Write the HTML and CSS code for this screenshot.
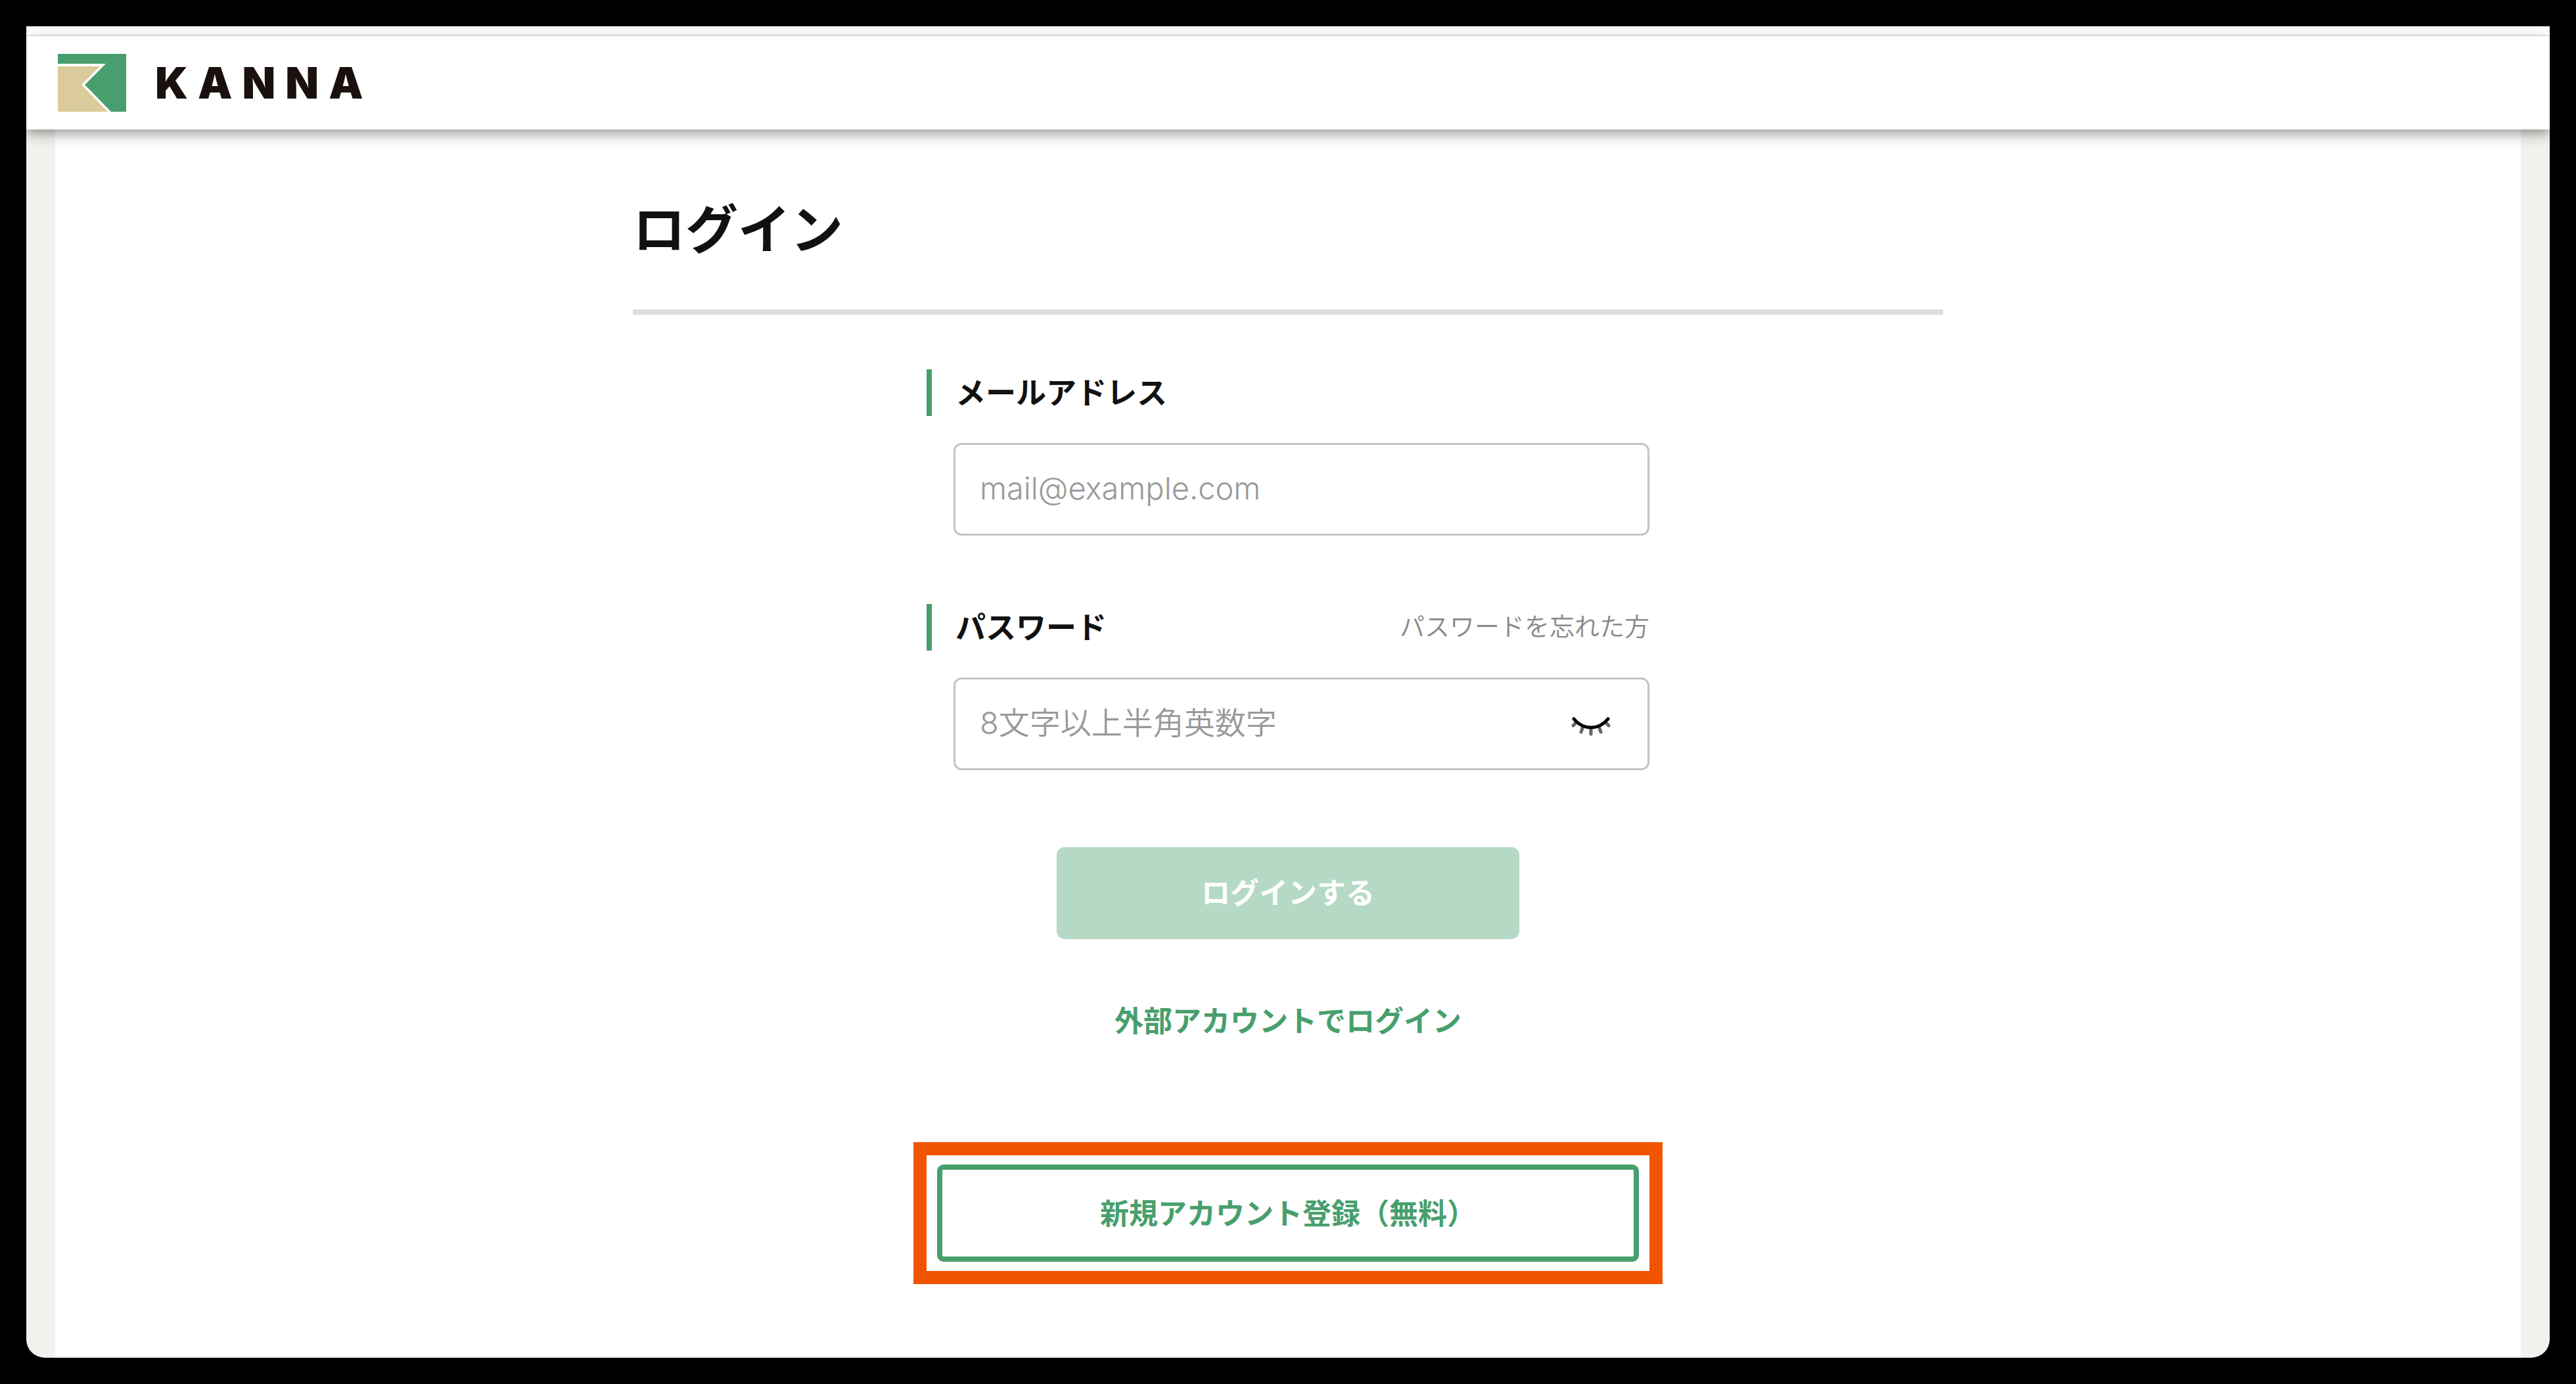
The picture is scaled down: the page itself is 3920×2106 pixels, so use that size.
FILE: index.html
```html
<!DOCTYPE html>
<html lang="ja">
<head>
<meta charset="utf-8">
<meta name="viewport" content="width=device-width, initial-scale=1">
<title>ログイン | KANNA</title>
<link rel="stylesheet" href="styles.css">
</head>
<body>
<div class="window">
  <div class="toolbar-edge"></div>
  <header class="header">
    <a class="brand" href="#">
      <svg class="brand-mark" viewBox="0 0 104 89" aria-hidden="true">
        <path fill="#489f6d" d="M1 0H103Q104 0 104 1V87Q104 88 103 88H81L41 47L73 15H0V1Q0 0 1 0Z"/>
        <path fill="#dccb9a" d="M0 19H64L36 47L76 88H1Q0 88 0 87Z"/>
      </svg>
      <span class="brand-name">KANNA</span>
    </a>
  </header>
  <main class="page">
    <div class="content">
      <h1 class="title">ログイン</h1>
      <form class="form">
        <div class="field">
          <div class="field-head">
            <label class="label" for="email">メールアドレス</label>
          </div>
          <div class="control">
            <input class="input" id="email" type="email" placeholder="mail@example.com">
          </div>
        </div>
        <div class="field">
          <div class="field-head">
            <label class="label" for="password">パスワード</label>
            <a class="forgot" href="#">パスワードを忘れた方</a>
          </div>
          <div class="control">
            <input class="input" id="password" type="password" placeholder="8文字以上半角英数字">
            <button class="reveal" type="button" aria-label="パスワードを表示">
              <svg class="eye" viewBox="0 0 60 30" fill="none" stroke-linecap="round" aria-hidden="true">
                <path stroke="#666" stroke-width="5" d="M6 10L3 13M17 17L15 23M30 18V26M43 17L45 23M54 10L57 13"/>
                <path stroke="#000" stroke-width="5" d="M4 3Q15 16 30 16T56 3"/>
              </svg>
            </button>
          </div>
        </div>
        <button class="submit" type="submit" disabled>ログインする</button>
        <a class="external" href="#">外部アカウントでログイン</a>
      </form>
      <div class="highlight">
        <button class="register" type="button">新規アカウント登録（無料）</button>
      </div>
    </div>
  </main>
</div>
</body>
</html>
```
FILE: styles.css
```css
*,
*::before,
*::after {
  box-sizing: border-box;
}

:root {
  --green: #489f6d;
  --ink: #111;
}

body {
  margin: 0;
  padding: 40px;
  min-height: 100vh;
  display: flex;
  background: #000;
  color: var(--ink);
  font-family: "Noto Sans CJK JP", sans-serif;
}

button,
input {
  font: inherit;
}

a {
  text-decoration: none;
}

.window {
  flex: 1;
  min-width: 0;
  display: flex;
  flex-direction: column;
  overflow: hidden;
  background: #f2f1ed;
  border-radius: 0 0 28px 28px;
}

.toolbar-edge {
  height: 15px;
  background: #fff;
  border-bottom: 2px solid #e2e2e2;
}

.header {
  position: relative;
  display: flex;
  align-items: center;
  height: 142px;
  padding: 0 48px;
  background: #fff;
  box-shadow: 0 6px 12px -3px rgba(0, 0, 0, .2), 0 12px 15px 0 rgba(0, 0, 0, .14), 0 3px 30px 0 rgba(0, 0, 0, .12);
}

.brand {
  display: flex;
  align-items: center;
  gap: 44px;
  color: #1a100e;
}

.brand-mark {
  width: 104px;
  height: 89px;
}

.brand-name {
  font: 900 66px/80px Inter, sans-serif;
  letter-spacing: 15px;
}

.page {
  flex: 1;
  margin: 0 44px;
  padding: 86px 40px 80px;
  background: #fff;
}

.content {
  max-width: 1994px;
  margin: 0 auto;
}

.title {
  margin: 0;
  padding-bottom: 68px;
  border-bottom: 8px solid #ddd;
  font-size: 80px;
  font-weight: 700;
  line-height: 120px;
}

.form {
  display: flex;
  flex-direction: column;
  align-items: center;
  max-width: 1100px;
  margin: 83px auto 0;
}

.field {
  width: 100%;
  margin-bottom: 104px;
}

.field-head {
  display: flex;
  align-items: center;
  justify-content: space-between;
  height: 71px;
  margin-bottom: 41px;
  padding: 0 0 8px 36px;
  border-left: 8px solid var(--green);
}

.label {
  font-size: 46px;
  font-weight: 700;
}

.forgot {
  color: #888;
  font-size: 38px;
  font-weight: 350;
}

.control {
  display: flex;
  position: relative;
  padding-left: 41px;
}

.input {
  width: 100%;
  height: 141px;
  padding: 0 37px 4px;
  border: 3px solid #c4c4c4;
  border-radius: 12px;
  background: #fff;
  color: var(--ink);
  font-family: Inter, "Noto Sans CJK JP", sans-serif;
  font-size: 47px;
  font-weight: 350;
}

.input::placeholder {
  color: #999;
  opacity: 1;
}

.reveal {
  position: absolute;
  top: 0;
  right: 44px;
  bottom: 0;
  width: 90px;
  padding: 8px 0 0;
  border: 0;
  background: none;
}

.eye {
  display: block;
  width: 60px;
  height: 30px;
  margin: 0 auto;
}

.submit {
  width: 704px;
  max-width: 100%;
  height: 140px;
  margin: 13px 0 92px;
  padding: 0 0 6px;
  border: 0;
  border-radius: 12px;
  background: #b6d9c6;
  color: #fff;
  font-size: 44px;
  font-weight: 700;
}

.external {
  color: var(--green);
  font-size: 44px;
  font-weight: 700;
  line-height: 60px;
}

.highlight {
  max-width: 1140px;
  margin: 157px auto 0;
  padding: 14px 16px;
  border: 20px solid #f15400;
}

.register {
  display: block;
  width: 100%;
  height: 148px;
  padding: 0 0 4px;
  border: 8px solid var(--green);
  border-radius: 10px;
  background: #fff;
  color: var(--green);
  font-size: 44px;
  font-weight: 700;
}
```
